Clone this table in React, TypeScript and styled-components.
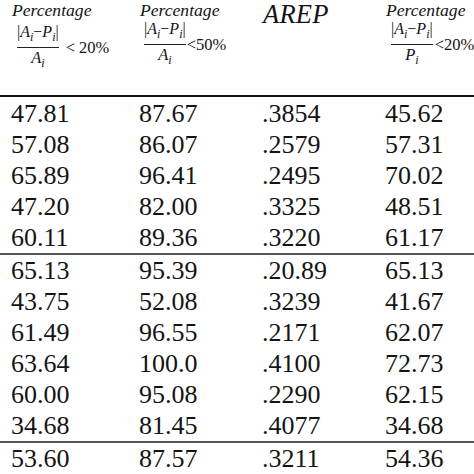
import styled, { createGlobalStyle } from "styled-components";

const GlobalStyle = createGlobalStyle`
  html, body {
    margin: 0;
    padding: 0;
    background: #ffffff;
  }
  body {
    width: 474px;
    height: 474px;
    overflow: hidden;
    font-family: "Liberation Serif", "Times New Roman", serif;
    color: #141414;
  }
`;

const COLUMNS = "128px 123px 123px 1fr";

const Table = styled.div`
  width: 474px;
  font-family: "Liberation Serif", "Times New Roman", serif;
`;

const Header = styled.div`
  display: grid;
  grid-template-columns: ${COLUMNS};
  padding-left: 11px;
  height: 95px;
  border-bottom: 2px solid #111;
`;

const HeadCell = styled.div`
  display: flex;
  flex-direction: column;
  padding-left: 1px;
`;

const Label = styled.div`
  font-style: italic;
  font-size: 17.6px;
  line-height: 20px;
  white-space: nowrap;
`;

const BigLabel = styled.div`
  font-style: italic;
  font-size: 26.5px;
  line-height: 29px;
  letter-spacing: 0.2px;
`;

const FractionRow = styled.div<{ $top: number }>`
  display: flex;
  align-items: flex-start;
  margin-top: ${({ $top }) => $top - 19}px;
  padding-left: 3px;
  white-space: nowrap;
`;

const Fraction = styled.div<{ $pad: number }>`
  display: flex;
  flex-direction: column;
  align-items: center;
  font-size: 16px;
  line-height: 18px;
  padding: 0 ${({ $pad }) => $pad}px;
`;

const Numerator = styled.div`
  height: 25px;
  width: 100%;
  text-align: center;
  border-bottom: 1px solid #222;
  box-sizing: border-box;
`;

const Denominator = styled.div`
  padding-top: 1px;
  font-size: 16.5px;
`;

const Var = styled.span`
  font-style: italic;
`;

const Sub = styled.sub`
  font-style: italic;
  font-size: 12px;
  vertical-align: -4px;
  line-height: 0;
`;

const Relation = styled.div<{ $gap: number }>`
  font-size: 16.5px;
  line-height: 18px;
  margin-top: 16px;
  margin-left: ${({ $gap }) => $gap}px;
`;

const Block = styled.div<{ $divider?: boolean }>`
  border-bottom: ${({ $divider }) => ($divider ? "2px solid #555" : "none")};
`;

const Row = styled.div`
  display: grid;
  grid-template-columns: ${COLUMNS};
  padding-left: 11px;
  height: 31px;
  font-size: 26px;
  line-height: 31px;
`;

const Cell = styled.div`
  white-space: nowrap;
`;

const Spacer = styled.div`
  height: 1px;
`;

type Ratio = { denom: "A" | "P"; rel: string; pad: number; gap: number; top: number };

const heads: (Ratio | null)[] = [
  { denom: "A", rel: "< 20%", pad: 2, gap: 5, top: 22 },
  { denom: "A", rel: "<50%", pad: 1, gap: 0, top: 19 },
  null,
  { denom: "P", rel: "<20%", pad: 2, gap: 0, top: 19 },
];

const blocks: string[][][] = [
  [
    ["47.81", "87.67", ".3854", "45.62"],
    ["57.08", "86.07", ".2579", "57.31"],
    ["65.89", "96.41", ".2495", "70.02"],
    ["47.20", "82.00", ".3325", "48.51"],
    ["60.11", "89.36", ".3220", "61.17"],
  ],
  [
    ["65.13", "95.39", ".20.89", "65.13"],
    ["43.75", "52.08", ".3239", "41.67"],
    ["61.49", "96.55", ".2171", "62.07"],
    ["63.64", "100.0", ".4100", "72.73"],
    ["60.00", "95.08", ".2290", "62.15"],
    ["34.68", "81.45", ".4077", "34.68"],
  ],
  [["53.60", "87.57", ".3211", "54.36"]],
];

function HeadRatio({ r }: { r: Ratio }) {
  return (
    <HeadCell>
      <Label>Percentage</Label>
      <FractionRow $top={r.top}>
        <Fraction $pad={r.pad}>
          <Numerator>
            |<Var>A</Var>
            <Sub>i</Sub>−<Var>P</Var>
            <Sub>i</Sub>|
          </Numerator>
          <Denominator>
            <Var>{r.denom}</Var>
            <Sub>i</Sub>
          </Denominator>
        </Fraction>
        <Relation $gap={r.gap}>{r.rel}</Relation>
      </FractionRow>
    </HeadCell>
  );
}

export default function App() {
  return (
    <Table>
      <GlobalStyle />
      <Header>
        {heads.map((h, i) =>
          h ? (
            <HeadRatio key={i} r={h} />
          ) : (
            <HeadCell key={i}>
              <BigLabel>AREP</BigLabel>
            </HeadCell>
          )
        )}
      </Header>
      <Spacer />
      {blocks.map((rows, b) => (
        <Block key={b} $divider={b < blocks.length - 1}>
          {rows.map((row, r) => (
            <Row key={r}>
              {row.map((v, c) => (
                <Cell key={c}>{v}</Cell>
              ))}
            </Row>
          ))}
        </Block>
      ))}
    </Table>
  );
}
